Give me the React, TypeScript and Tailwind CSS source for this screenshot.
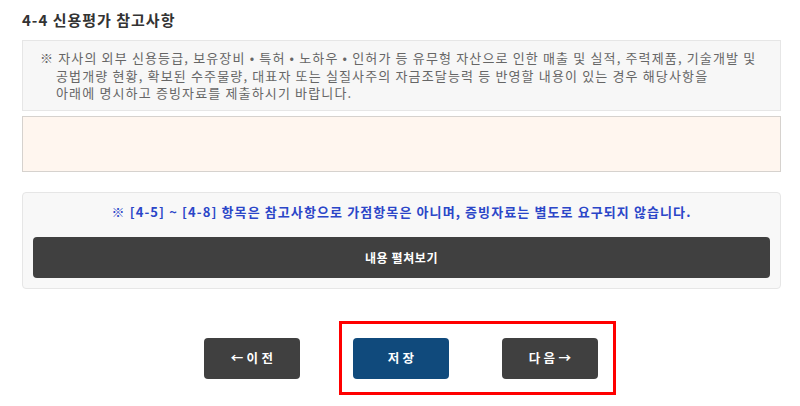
import React from 'react';

const font = { fontFamily: '"Malgun Gothic", "Noto Sans CJK KR", "Noto Sans", sans-serif' };

function NavButton({ label, tone }: { label: string; tone: 'dark' | 'blue' }) {
  return (
    <button
      type="button"
      className={`w-[96px] h-[41px] rounded-[4px] text-white text-[12.5px] font-bold tracking-[0.3px] ${
        tone === 'blue' ? 'bg-[#104a7c]' : 'bg-[#404040]'
      }`}
    >
      {label}
    </button>
  );
}

export default function App() {
  return (
    <div className="relative w-[800px] h-[406px] bg-white overflow-hidden" style={font}>
      <div className="pl-[22px] pr-[19px] pt-[10px]">
        <h2 className="text-[15px] leading-[20px] font-bold text-[#333] tracking-[1px]">4-4 신용평가 참고사항</h2>

        {/* notice */}
        <div className="mt-[10px] h-[71px] bg-[#f7f7f7] border border-[#e6e6e6] pt-[8px] pl-[33px] pr-[4px]">
          <p className="-indent-[16px] text-[13px] leading-[17.5px] text-[#666] tracking-[1.15px] whitespace-nowrap">
            ※ 자사의 외부 신용등급, 보유장비 • 특허 • 노하우 • 인허가 등 유무형 자산으로 인한 매출 및 실적, 주력제품, 기술개발 및
            <br />
            공법개량 현황, 확보된 수주물량, 대표자 또는 실질사주의 자금조달능력 등 반영할 내용이 있는 경우 해당사항을
            <br />
            아래에 명시하고 증빙자료를 제출하시기 바랍니다.
          </p>
        </div>

        {/* input area */}
        <div className="mt-[5px] h-[56px] bg-[#fff6ef] border border-[#d6d2ce]" />

        {/* reference items */}
        <div className="mt-[20px] h-[97px] rounded-[4px] bg-[#f8f8f8] border border-[#e6e6e6] px-[10px] pt-[10px]">
          <p className="text-center text-[13px] leading-[18px] font-bold text-[#2b46c8] tracking-[1.1px] whitespace-nowrap">
            ※ [4-5] ~ [4-8] 항목은 참고사항으로 가점항목은 아니며, 증빙자료는 별도로 요구되지 않습니다.
          </p>
          <button
            type="button"
            className="mt-[16px] w-full h-[41px] rounded-[4px] bg-[#404040] text-white text-[12px] font-bold tracking-[0.6px]"
          >
            내용 펼쳐보기
          </button>
        </div>

        {/* nav */}
        <div className="mt-[49px] flex justify-center gap-[53px] pr-[1px]">
          <NavButton label="← 이 전" tone="dark" />
          <NavButton label="저 장" tone="blue" />
          <NavButton label="다 음 →" tone="dark" />
        </div>
      </div>

      {/* highlight annotation */}
      <div className="absolute left-[339px] top-[321px] w-[277px] h-[74px] border-[3px] border-[#ff0000] pointer-events-none" />
    </div>
  );
}
